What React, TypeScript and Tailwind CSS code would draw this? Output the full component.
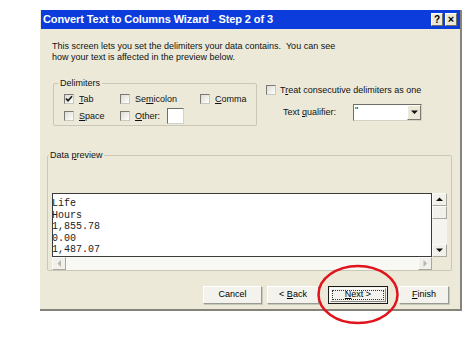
import React from "react";

const U = ({ children }: { children: React.ReactNode }) => (
  <span className="underline underline-offset-[1px] decoration-[1px]">{children}</span>
);

function Check({ checked }: { checked?: boolean }) {
  return (
    <span className="w-[10px] h-[10px] shrink-0 flex items-center justify-center bg-gradient-to-br from-[#dcdcd4] to-white border border-t-[#7a7a72] border-l-[#7a7a72] border-r-[#c8c8c0] border-b-[#c8c8c0]">
      {checked && (
        <svg width="8" height="8" viewBox="0 0 8 8">
          <path d="M1 3.5 L3 5.8 L7 1.3" stroke="#1a1a1a" strokeWidth="1.7" fill="none" />
        </svg>
      )}
    </span>
  );
}

function Opt({ checked, children }: { checked?: boolean; children: React.ReactNode }) {
  return (
    <div className="flex items-center gap-[5px] h-[16px]">
      <Check checked={checked} />
      <span className="leading-[11px]">{children}</span>
    </div>
  );
}

function TitleBtn({ children }: { children: React.ReactNode }) {
  return (
    <div className="w-[12px] h-[13px] bg-[#ece9d8] border border-t-white border-l-white border-r-[#6e6e66] border-b-[#6e6e66] flex items-center justify-center text-[10px] font-bold leading-none text-black">
      {children}
    </div>
  );
}

function Arrow({ dir, color }: { dir: "up" | "down" | "left" | "right"; color: string }) {
  const d =
    dir === "up"
      ? "M0 4 L3.5 0.5 L7 4 Z"
      : dir === "down"
      ? "M0 0.5 L3.5 4 L7 0.5 Z"
      : dir === "left"
      ? "M4 0 L0.5 3.5 L4 7 Z"
      : "M0.5 0 L4 3.5 L0.5 7 Z";
  const w = dir === "up" || dir === "down" ? 7 : 5;
  const h = dir === "up" || dir === "down" ? 5 : 7;
  return (
    <svg width={w} height={h} viewBox={`0 0 ${w} ${h}`}>
      <path d={d} fill={color} />
    </svg>
  );
}

function SBtn({ children, className }: { children?: React.ReactNode; className: string }) {
  return (
    <div
      className={
        "bg-[#f1f0ea] border border-t-[#fbfbf8] border-l-[#fbfbf8] border-r-[#a8a89c] border-b-[#a8a89c] flex items-center justify-center " +
        className
      }
    >
      {children}
    </div>
  );
}

function Btn({ children, w, def }: { children: React.ReactNode; w: string; def?: boolean }) {
  if (def) {
    return (
      <div className={"h-[18px] border border-[#1a1a1a] bg-[#f3f2ec] p-[1px] " + w}>
        <div className="h-full border border-r-[#8a8a80] border-b-[#8a8a80] border-t-white border-l-white p-[1px]">
          <div className="h-full border border-dotted border-[#333] flex items-center justify-center text-[9px] text-black">
            <span className="whitespace-pre">{children}</span>
          </div>
        </div>
      </div>
    );
  }
  return (
    <div
      className={
        "h-[18px] bg-[#f3f2ec] border border-t-white border-l-white border-r-[#9a9a90] border-b-[#9a9a90] shadow-[1px_1px_0_#c8c8bc] flex items-center justify-center text-[9px] text-black " +
        w
      }
    >
      <span className="whitespace-pre">{children}</span>
    </div>
  );
}

export default function App() {
  return (
    <div className="relative w-[474px] h-[341px] bg-white overflow-hidden font-['Liberation_Sans',Arial,sans-serif] text-[#111]">
      <div className="pt-[10px] pl-[40px]">
        <div className="w-[422px] h-[301px] bg-[#ece9d8] border-r-2 border-b-2 border-[#85837a] flex flex-col">
          {/* Title bar */}
          <div className="h-[19px] ml-[1px] bg-[#0c3ddc] flex items-center pl-[2px] pr-[3px]">
            <span className="text-white font-bold text-[11px] leading-none tracking-[-0.1px]">
              Convert Text to Columns Wizard - Step 2 of 3
            </span>
            <div className="ml-auto flex gap-[2px]">
              <TitleBtn>?</TitleBtn>
              <TitleBtn>
                <span className="text-[11px] leading-none">×</span>
              </TitleBtn>
            </div>
          </div>

          {/* Intro text */}
          <p className="pl-[12px] pt-[12px] text-[9px] leading-[11px]">
            This screen lets you set the delimiters your data contains.&nbsp; You can see
            <br />
            how your text is affected in the preview below.
          </p>

          {/* Delimiters + options */}
          <div className="flex mt-[15px] text-[9px]">
            <fieldset className="ml-[13px] w-[204px] h-[48px] border border-[#c9c7b8] rounded-[2px] pl-[10px] pr-0">
              <legend className="px-[2px] -ml-[6px] leading-[11px]">Delimiters</legend>
              <div className="grid grid-cols-[56px_80px_1fr] mt-[2px] gap-y-[1px]">
                <Opt checked>
                  <U>T</U>ab
                </Opt>
                <Opt>
                  Se<U>m</U>icolon
                </Opt>
                <Opt>
                  <U>C</U>omma
                </Opt>
                <Opt>
                  <U>S</U>pace
                </Opt>
                <div className="flex items-center gap-[5px] h-[16px]">
                  <Check />
                  <span className="leading-[11px]">
                    <U>O</U>ther:
                  </span>
                  <span className="w-[17px] h-[16px] bg-white border border-t-[#6f6f68] border-l-[#6f6f68] border-r-[#d4d2c6] border-b-[#d4d2c6] ml-[2px]" />
                </div>
              </div>
            </fieldset>

            <div className="ml-[9px] mt-[6px] flex flex-col">
              <div className="flex items-center gap-[4px] h-[12px]">
                <Check />
                <span className="leading-[11px]">
                  T<U>r</U>eat consecutive delimiters as one
                </span>
              </div>
              <div className="flex items-center mt-[8px] ml-[17px]">
                <span className="w-[70px] leading-[11px]">
                  Text <U>q</U>ualifier:
                </span>
                <div className="w-[69px] h-[17px] bg-white border border-t-[#6f6f68] border-l-[#6f6f68] border-r-[#d4d2c6] border-b-[#d4d2c6] flex">
                  <span className="pl-[1px] leading-[10px] text-[9px]">"</span>
                  <div className="ml-auto w-[14px] h-full bg-[#ece9d8] border border-t-white border-l-white border-r-[#7a7a70] border-b-[#7a7a70] flex items-center justify-center">
                    <Arrow dir="down" color="#111" />
                  </div>
                </div>
              </div>
            </div>
          </div>

          {/* Data preview */}
          <fieldset className="ml-[7px] mt-[24px] w-[405px] h-[121px] border border-[#c9c7b8] rounded-[2px] pl-[4px] text-[9px]">
            <legend className="px-[1px] -ml-[3px] leading-[11px]">
              Data <U>p</U>review
            </legend>
            <div className="mt-[32px] grid grid-cols-[380px_15px] grid-rows-[64px_13px]">
              <div className="bg-white border border-[#3c3c3c] overflow-hidden font-['Liberation_Mono','Courier_New',monospace] text-[10px] leading-[11.5px] text-[#222] pt-[4px] -indent-[1px]">
                <div>Life</div>
                <div>Hours</div>
                <div>1,855.78</div>
                <div>0.00</div>
                <div>1,487.07</div>
              </div>
              <div className="flex flex-col bg-[#f5f4ee]">
                <SBtn className="h-[13px]">
                  <Arrow dir="up" color="#111" />
                </SBtn>
                <SBtn className="h-[13px]" />
                <div className="flex-1" />
                <SBtn className="h-[13px]">
                  <Arrow dir="down" color="#111" />
                </SBtn>
              </div>
              <div className="flex bg-[#f8f8f4]">
                <SBtn className="w-[14px]">
                  <Arrow dir="left" color="#b6b6ac" />
                </SBtn>
                <div className="flex-1" />
                <SBtn className="w-[14px]">
                  <Arrow dir="right" color="#b6b6ac" />
                </SBtn>
              </div>
              <div />
            </div>
          </fieldset>

          {/* Buttons */}
          <div className="flex mt-[15px] ml-[163px]">
            <Btn w="w-[59px]">Cancel</Btn>
            <div className="ml-[5px]">
              <Btn w="w-[52px]">
                {"< "}
                <U>B</U>ack
              </Btn>
            </div>
            <div className="ml-[9px]">
              <Btn w="w-[60px]" def>
                <U>N</U>
                {"ext >"}
              </Btn>
            </div>
            <div className="ml-[11px]">
              <Btn w="w-[50px]">
                <U>F</U>inish
              </Btn>
            </div>
          </div>
        </div>
      </div>

      {/* Red highlight circle */}
      <svg className="absolute left-0 top-0 pointer-events-none" width="474" height="341">
        <ellipse cx="358" cy="294.5" rx="39.5" ry="28.5" fill="none" stroke="#e0141c" strokeWidth="2.5" />
      </svg>
    </div>
  );
}
